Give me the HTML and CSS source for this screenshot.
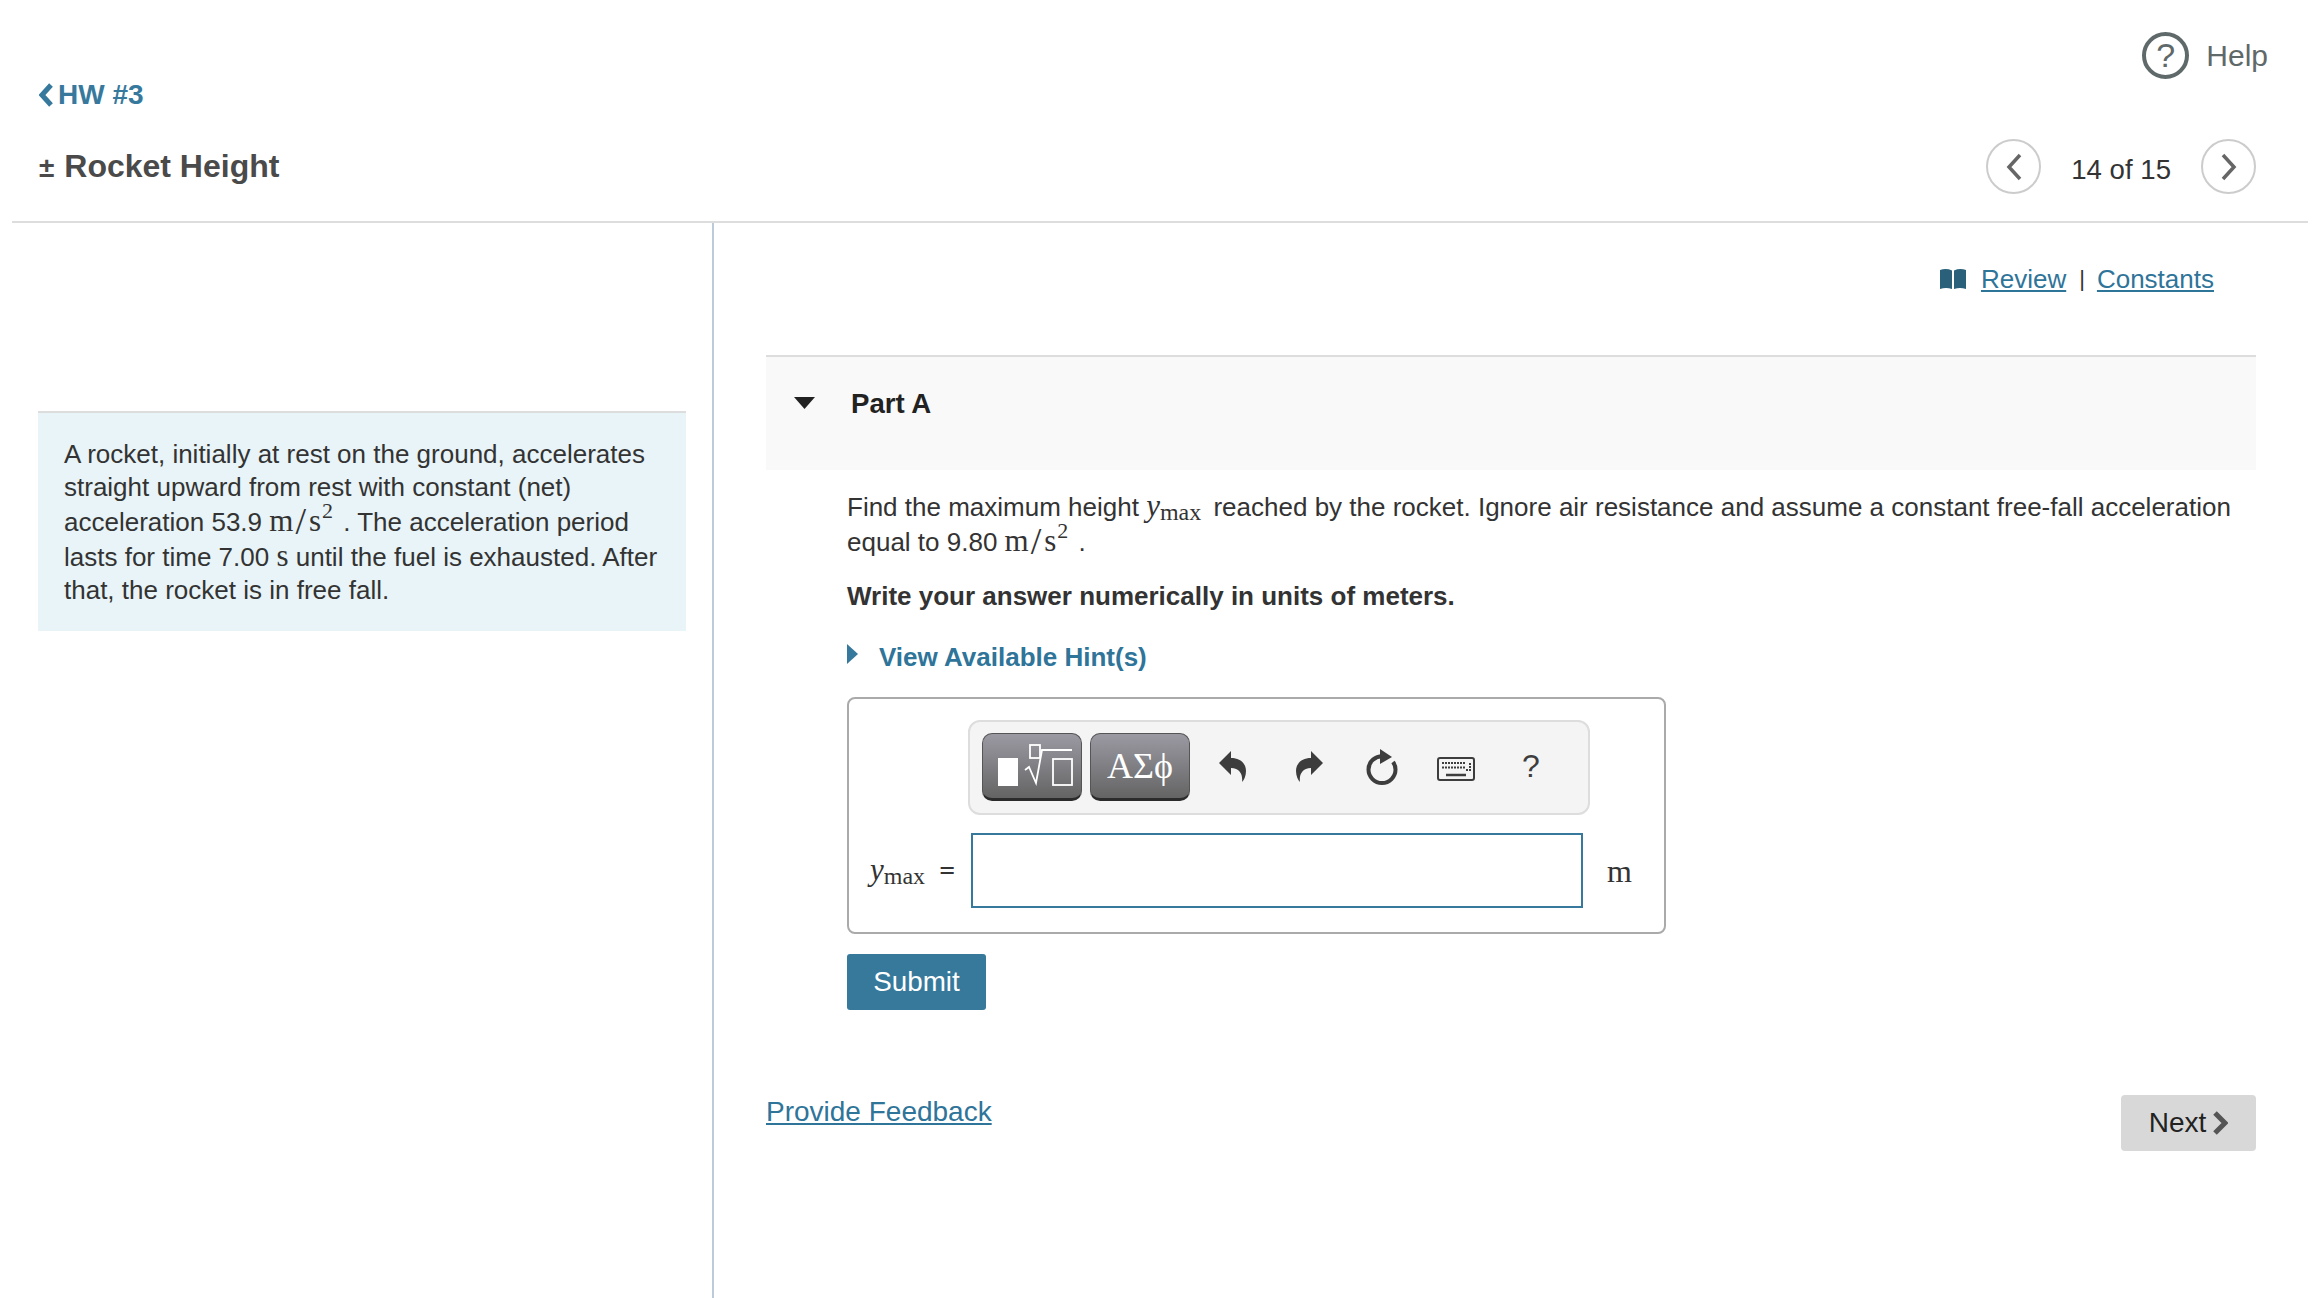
FILE: index.html
```html
<!DOCTYPE html>
<html lang="en">

<head>
    <meta charset="UTF-8">
    <title>Rocket Height</title>
    <link rel="stylesheet" href="styles.css">
</head>

<body>
    <div class="header">
        <div class="top-row">
            <a class="back-link">
                <svg class="back-icon" width="15" height="24" viewBox="0 0 15 24"><path d="M12 2 3 12l9 10" fill="none" stroke="#37799c" stroke-width="5"/></svg>HW #3
            </a>
            <div class="help">
                <span class="help-icon">?</span>
                <span>Help</span>
            </div>
        </div>
        <div class="title-row">
            <h1 class="title"><span class="plus-minus">±</span> Rocket Height</h1>
            <div class="pager">
                <span class="pager-btn"><svg width="16" height="28" viewBox="0 0 16 28"><path d="M14 2 3 14l11 12" fill="none" stroke="#666" stroke-width="3.5"/></svg></span>
                <span class="pager-count">14 of 15</span>
                <span class="pager-btn"><svg width="16" height="28" viewBox="0 0 16 28"><path d="M2 2l11 12L2 26" fill="none" stroke="#666" stroke-width="3.5"/></svg></span>
            </div>
        </div>
    </div>

    <div class="main">
        <div class="left-col">
            <div class="intro">
                A rocket, initially at rest on the ground, accelerates straight upward from rest with constant (net) acceleration 53.9 <span class="math">m<span class="slash">/</span>s<sup>2</sup></span> . The acceleration period lasts for time 7.00 <span class="math">s</span> until the fuel is exhausted. After that, the rocket is in free fall.
            </div>
        </div>

        <div class="right-col">
            <div class="links">
                <svg class="book-icon" width="26" height="20" viewBox="0 0 26 20"><path d="M0 1c4-1.300 8-1.300 12 .5V20c-4-1.500-8-1.500-12 0zM14 1.500c4-1.800 8-1.800 12-.5v19c-4-1.500-8-1.500-12 0z" fill="#2a6079"/></svg>
                <a class="link review-link">Review</a>
                <span class="sep">|</span>
                <a class="link">Constants</a>
            </div>

            <div class="part-head">
                <svg width="21" height="12" viewBox="0 0 21 12"><path d="M0 0h21L10.500 12z" fill="#222"/></svg>
                <span class="part-name">Part A</span>
            </div>

            <div class="part-body">
                <p class="question">Find the maximum height <span class="math"><i>y</i><span class="sub">max</span></span> reached by the rocket. Ignore air resistance and assume a constant free-fall acceleration equal to 9.80 <span class="math">m<span class="slash">/</span>s<sup>2</sup></span> .</p>
                <p class="instruction">Write your answer numerically in units of meters.</p>
                <div class="hints">
                    <svg width="11" height="20" viewBox="0 0 11 20"><path d="M0 0l11 10L0 20z" fill="#37799c"/></svg>
                    <span>View Available Hint(s)</span>
                </div>

                <div class="answer-box">
                    <div class="toolbar">
                        <span class="tool-btn">
                            <svg width="100" height="66" viewBox="0 0 100 66">
                                <rect x="16" y="25" width="20" height="28" fill="#fff"/>
                                <g fill="none" stroke="#fff" stroke-width="1.800">
                                    <rect x="48" y="12" width="10" height="13"/>
                                    <path d="M43 37l4-3 7 16 6-33h30"/>
                                    <rect x="71" y="26" width="19" height="26"/>
                                </g>
                            </svg>
                        </span>
                        <span class="tool-btn tool-btn-text">ΑΣϕ</span>
                        <svg class="tool-undo" width="27" height="31" viewBox="0 0 27 31"><path d="M0 12 12 0v7c10 0 15 6 15 13 0 5-2 9-4 11 1-7-2-14-11-14v7z" fill="#3d3d3d"/></svg>
                        <svg class="tool-redo" width="27" height="31" viewBox="0 0 27 31"><path d="M27 12 15 0v7C5 7 0 13 0 20c0 5 2 9 4 11-1-7 2-14 11-14v7z" fill="#3d3d3d"/></svg>
                        <svg class="tool-reset" width="32" height="36" viewBox="0 0 32 36"><path d="M19 7.500C9 6 2.500 13 2.500 20.500a13.500 13.500 0 0 0 27 0c0-3-1-5.500-2.500-7.500" fill="none" stroke="#3d3d3d" stroke-width="4"/><path d="M14 0l12 8-12 7z" fill="#3d3d3d"/></svg>
                        <svg class="tool-keys" width="38" height="24" viewBox="0 0 38 24">
                            <rect x="1" y="1" width="36" height="22" rx="2" fill="#f4f4f4" stroke="#3d3d3d" stroke-width="2"/>
                            <path d="M5 6h24M5 10.500h24M33 6v7h-4" fill="none" stroke="#3d3d3d" stroke-width="2" stroke-dasharray="2 1"/>
                            <path d="M9 18h20" stroke="#3d3d3d" stroke-width="2.500"/>
                        </svg>
                        <span class="tool-help">?</span>
                    </div>
                    <div class="input-row">
                        <span class="input-label"><span class="math"><i>y</i><span class="sub">max</span></span> <span class="math equals">=</span></span>
                        <div class="answer-input"></div>
                        <span class="math unit">m</span>
                    </div>
                </div>

                <button class="submit">Submit</button>
            </div>

            <div class="foot">
                <a class="link feedback">Provide Feedback</a>
                <button class="next">Next <svg width="16" height="24" viewBox="0 0 16 24"><path d="M3 2l10 10L3 22" fill="none" stroke="#555" stroke-width="5"/></svg></button>
            </div>
        </div>
    </div>
</body>

</html>
```

FILE: styles.css
```css
* {
    margin: 0;
    padding: 0;
    box-sizing: border-box;
}

body {
    height: 1298px;
    overflow: hidden;
    background: #fff;
    color: #333;
    font-family: "Liberation Sans", Arial, sans-serif;
    font-size: 26px;
    line-height: 34px;
}

.header {
    margin: 0 10px 0 12px;
    height: 223px;
    padding: 0 0 0 27px;
    border-bottom: 2px solid #ddd;
}

.top-row {
    height: 136px;
    display: flex;
    justify-content: space-between;
    align-items: flex-start;
}

.back-link {
    margin-top: 78px;
    display: flex;
    align-items: center;
    font-size: 28px;
    font-weight: bold;
    color: #37799c;
}

.back-icon {
    margin-right: 4px;
}

.help {
    margin: 32px 40px 0 0;
    display: flex;
    align-items: center;
    gap: 17px;
    color: #5f6969;
    font-size: 30px;
}

.help-icon {
    width: 47px;
    height: 47px;
    border: 4px solid #5f6969;
    border-radius: 50%;
    text-align: center;
    line-height: 39px;
    font-size: 34px;
}

.title-row {
    display: flex;
    justify-content: space-between;
    align-items: flex-start;
    padding-right: 52px;
}

.title {
    margin-top: 10px;
    font-size: 32px;
    line-height: 40px;
    color: #4a4a4a;
}

.plus-minus {
    font-size: 28px;
    margin-right: 1px;
}

.pager {
    display: flex;
    align-items: center;
    gap: 30px;
    margin-top: 3px;
    font-size: 27.6px;
}

.pager-btn {
    width: 55px;
    height: 55px;
    border: 2px solid #ccc;
    border-radius: 50%;
    display: flex;
    align-items: center;
    justify-content: center;
}

.pager-count {
    padding-top: 6px;
}

.main {
    display: flex;
    height: 1075px;
}

.left-col {
    width: 714px;
    border-right: 2px solid #bccbdb;
    padding: 188px 26px 0 38px;
}

.intro {
    height: 220px;
    background: #e8f4f7;
    border-top: 2px solid #ddd;
    padding: 25px 14px 0 26px;
    line-height: 33px;
}

.right-col {
    width: 1542px;
    padding-left: 52px;
}

.link {
    color: #2f7499;
    text-decoration: underline;
}

.links {
    height: 132px;
    padding: 39px 42px 0 0;
    display: flex;
    justify-content: flex-end;
    align-items: flex-start;
}

.book-icon {
    margin: 7px 8px 0 0;
}

.review-link {
    padding-left: 7px;
}

.sep {
    margin: 0 12px 0 13px;
    font-size: 22px;
}

.part-head {
    height: 115px;
    background: #f9f9f9;
    border-top: 2px solid #ddd;
    display: flex;
    align-items: flex-start;
    padding: 39px 0 0 28px;
    gap: 36px;
    font-size: 27.6px;
    font-weight: bold;
    color: #222;
}

.part-head svg {
    margin-top: 1px;
}

.part-name {
    margin-top: -9px;
}

.part-body {
    padding: 19px 0 0 81px;
}

.question {
    line-height: 34px;
}

.math {
    font-family: "Liberation Serif", "Times New Roman", serif;
    font-size: 31px;
}

.slash {
    margin: 0 3px 0 2px;
    font-size: 38px;
    font-weight: normal;
    line-height: 20px;
    vertical-align: -3px;
}

.math sup {
    margin: 0 3px 0 1px;
    font-size: 22px;
    line-height: 0;
    vertical-align: 13px;
}

.sub {
    margin-right: 5px;
    font-size: 24px;
    line-height: 0;
    vertical-align: -4px;
}

.instruction {
    margin-top: 20px;
    font-weight: bold;
}

.hints {
    margin-top: 27px;
    display: flex;
    align-items: flex-start;
    gap: 21px;
    font-weight: bold;
    color: #2f7499;
}

.hints svg {
    margin-top: 4px;
}

.answer-box {
    margin-top: 23px;
    width: 819px;
    height: 237px;
    border: 2px solid #aaa;
    border-radius: 8px;
    padding: 21px 0 0 119px;
}

.toolbar {
    width: 622px;
    height: 95px;
    background: #f4f4f4;
    border: 2px solid #ddd;
    border-radius: 12px;
    padding: 0 0 1px 12px;
    display: flex;
    align-items: center;
}

.tool-btn {
    width: 100px;
    height: 68px;
    margin-right: 8px;
    border: 1px solid #555;
    border-bottom: 3px solid #2b2b2b;
    border-radius: 10px;
    background: linear-gradient(#9b9aa3, #646464);
    display: flex;
    align-items: center;
    justify-content: center;
}

.tool-btn svg {
    flex: none;
}

.tool-btn-text {
    font-family: "Liberation Serif", "Times New Roman", serif;
    font-size: 36px;
    color: #fff;
}

.tool-undo {
    margin-left: 21px;
    margin-top: -2px;
}

.tool-redo {
    margin-left: 50px;
    margin-top: -2px;
}

.tool-reset {
    margin-left: 43px;
    margin-top: -1px;
}

.tool-keys {
    margin-left: 39px;
    margin-top: 4px;
}

.tool-help {
    margin-left: 47px;
    margin-top: -2px;
    font-size: 32px;
    color: #3d3d3d;
}

.input-row {
    margin: 18px 0 0 -98px;
    display: flex;
    align-items: center;
}

.input-label {
    width: 101px;
    white-space: nowrap;
}

.equals {
    margin-left: 2px;
    font-size: 28px;
    font-weight: bold;
}

.answer-input {
    width: 612px;
    height: 75px;
    background: #fff;
    border: 2px solid #37799c;
}

.unit {
    margin-left: 24px;
    font-size: 32px;
}

.submit {
    display: block;
    margin-top: 20px;
    width: 139px;
    height: 56px;
    background: #37799b;
    border: 0;
    border-radius: 3px;
    color: #fff;
    font-family: inherit;
    font-size: 27.8px;
}

.foot {
    margin-top: 85px;
    display: flex;
    justify-content: space-between;
    align-items: flex-start;
}

.feedback {
    font-size: 28px;
}

.next {
    width: 135px;
    height: 56px;
    background: #d8d8d8;
    border: 0;
    border-radius: 4px;
    color: #222;
    font-family: inherit;
    font-size: 28px;
    display: flex;
    align-items: center;
    justify-content: center;
    gap: 6px;
}
```
